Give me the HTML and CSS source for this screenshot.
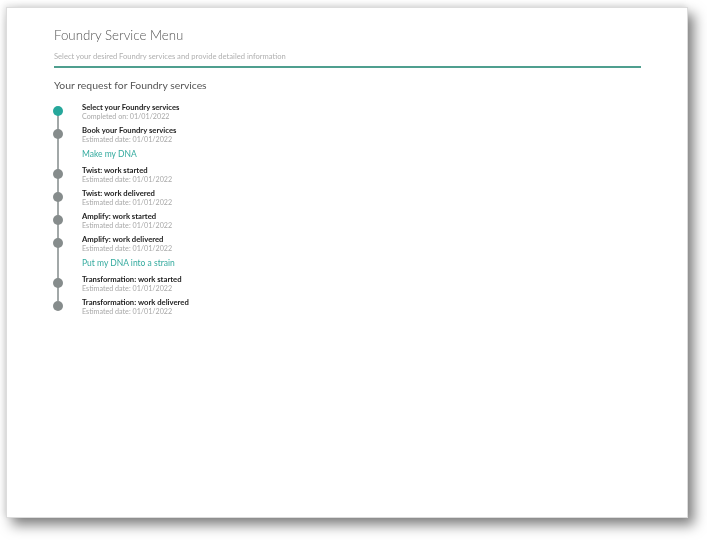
FILE: index.html
```html
<!DOCTYPE html>
<html lang="en">
<head>
    <meta charset="UTF-8">
    <title>Foundry Service Menu</title>
    <link rel="stylesheet" href="styles.css">
</head>
<body>
    <div class="panel">
        <h1 class="page-title">Foundry Service Menu</h1>
        <p class="page-subtitle">Select your desired Foundry services and provide detailed information</p>
        <hr class="page-rule">
        <h2 class="request-title">Your request for Foundry services</h2>

        <div class="timeline">
            <div class="step current">
                <span class="dot"></span>
                <div class="step-text">
                    <div class="step-name">Select your Foundry services</div>
                    <div class="step-date">Completed on: 01/01/2022</div>
                </div>
            </div>
            <div class="step">
                <span class="dot"></span>
                <div class="step-text">
                    <div class="step-name">Book your Foundry services</div>
                    <div class="step-date">Estimated date: 01/01/2022</div>
                </div>
            </div>
            <div class="group-name">Make my DNA</div>
            <div class="step">
                <span class="dot"></span>
                <div class="step-text">
                    <div class="step-name">Twist: work started</div>
                    <div class="step-date">Estimated date: 01/01/2022</div>
                </div>
            </div>
            <div class="step">
                <span class="dot"></span>
                <div class="step-text">
                    <div class="step-name">Twist: work delivered</div>
                    <div class="step-date">Estimated date: 01/01/2022</div>
                </div>
            </div>
            <div class="step">
                <span class="dot"></span>
                <div class="step-text">
                    <div class="step-name">Amplify: work started</div>
                    <div class="step-date">Estimated date: 01/01/2022</div>
                </div>
            </div>
            <div class="step">
                <span class="dot"></span>
                <div class="step-text">
                    <div class="step-name">Amplify: work delivered</div>
                    <div class="step-date">Estimated date: 01/01/2022</div>
                </div>
            </div>
            <div class="group-name">Put my DNA into a strain</div>
            <div class="step">
                <span class="dot"></span>
                <div class="step-text">
                    <div class="step-name">Transformation: work started</div>
                    <div class="step-date">Estimated date: 01/01/2022</div>
                </div>
            </div>
            <div class="step">
                <span class="dot"></span>
                <div class="step-text">
                    <div class="step-name">Transformation: work delivered</div>
                    <div class="step-date">Estimated date: 01/01/2022</div>
                </div>
            </div>
        </div>
    </div>
</body>
</html>
```

FILE: styles.css
```css
html, body {
    height: 100%;
}

body {
    margin: 0;
    padding: 7px 19px 22px 6px;
    box-sizing: border-box;
    background: #ffffff;
    font-family: 'Lato', sans-serif;
    overflow: hidden;
}

.panel {
    height: 511px;
    box-sizing: border-box;
    padding: 19px 46px 0 47px;
    background: #ffffff;
    border: 1px solid #dcdcdc;
    box-shadow: 6px 7px 12px rgba(0, 0, 0, 0.5), -2px -2px 6px rgba(0, 0, 0, 0.1);
}

.page-title,
.page-subtitle,
.request-title,
.timeline {
    filter: blur(0.3px);
}

.page-title {
    margin: 0;
    font-size: 13.3px;
    line-height: 16px;
    font-weight: 300;
    color: #555555;
}

.page-subtitle {
    margin: 8px 0 0;
    font-size: 7.6px;
    line-height: 10px;
    color: #b0b0b0;
}

.page-rule {
    margin: 5px 0 0;
    border: none;
    height: 2px;
    background: #4f9f8f;
}

.request-title {
    margin: 10px 0 0;
    font-size: 10.4px;
    line-height: 14px;
    font-weight: 400;
    color: #555555;
}

.timeline {
    position: relative;
    margin: 8px 0 0 -1px;
}

.timeline::before {
    content: '';
    position: absolute;
    left: 4px;
    top: 7px;
    height: 194px;
    width: 1.5px;
    background: #a2a8a8;
}

.step {
    position: relative;
    display: flex;
    align-items: center;
    gap: 19px;
    height: 23px;
}

.dot {
    flex: none;
    width: 10px;
    height: 10px;
    margin-top: -2px;
    border-radius: 50%;
    background: #868c8c;
}

.current .dot {
    background: #26a79b;
}

.step-name {
    font-size: 7.7px;
    line-height: 9px;
    font-weight: 700;
    color: #222222;
}

.step-date {
    font-size: 7.15px;
    line-height: 9px;
    color: #a8a8a8;
}

.group-name {
    height: 17px;
    padding-left: 29px;
    font-size: 8.5px;
    line-height: 17px;
    color: #35ab9f;
}
```
